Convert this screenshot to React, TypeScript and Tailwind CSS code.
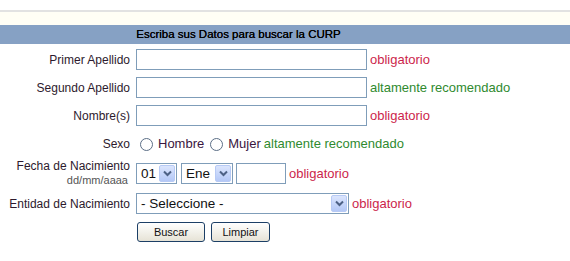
import type { ReactNode } from "react";

const FONT = { fontFamily: '"Liberation Sans", Arial, sans-serif' };

function Arrow() {
  return (
    <span className="flex h-[17px] w-[16px] items-center justify-center rounded-[2px] border border-[#b7caf5] bg-gradient-to-b from-[#dbe5fd] to-[#b4c8f6]">
      <svg width="9" height="7" viewBox="0 0 9 7">
        <path d="M1 1.5 L4.5 5 L8 1.5" fill="none" stroke="#4d6185" strokeWidth="2" />
      </svg>
    </span>
  );
}

function FakeSelect({ value, width }: { value: string; width: string }) {
  return (
    <div
      className={`flex h-[21px] ${width} items-center justify-between border border-[#7f9db9] bg-white pl-[4px] pr-[1px] text-[13.5px] leading-none text-[#111]`}
    >
      <span>{value}</span>
      <Arrow />
    </div>
  );
}

function Radio() {
  return <span className="inline-block h-[13px] w-[13px] rounded-full border border-[#5b6e86] bg-white" />;
}

function Label({ children }: { children: ReactNode }) {
  return <div className="text-right text-[12px] text-[#2d1a2d]">{children}</div>;
}

function Required() {
  return <span className="ml-[3px] text-[13px] text-[#cc1f4c]">obligatorio</span>;
}

function Recommended() {
  return <span className="ml-[3px] text-[13px] text-[#2f8a2f]">altamente recomendado</span>;
}

function TextBox({ width }: { width: string }) {
  return <div className={`h-[21px] ${width} border border-[#7f9db9] bg-white`} />;
}

function XpButton({ children, width }: { children: ReactNode; width: string }) {
  return (
    <button
      type="button"
      className={`h-[20px] ${width} rounded-[3px] border border-[#1c3f66] bg-gradient-to-b from-white to-[#e6e3d6] text-[11px] text-[#111]`}
    >
      {children}
    </button>
  );
}

export default function App() {
  return (
    <div className="h-[261px] w-[570px] overflow-hidden bg-white" style={FONT}>
      <div className="h-[10px]" />
      <div className="h-[2px] bg-[#e2e2e2]" />
      <div className="h-[13px] bg-[#fffef5]" />
      <div className="flex h-[19px] items-center bg-[#86a1c4]">
        <div className="w-[477px] text-center text-[11.5px] text-black [text-shadow:0_0_0.4px_#000]">
          Escriba sus Datos para buscar la CURP
        </div>
      </div>

      <div className="mt-[5px] grid grid-cols-[130px_1fr] items-center gap-x-[6px]">
        <Label>Primer Apellido</Label>
        <div className="flex items-center">
          <TextBox width="w-[231px]" />
          <Required />
        </div>

        <div className="col-span-2 h-[7px]" />
        <Label>Segundo Apellido</Label>
        <div className="flex items-center">
          <TextBox width="w-[231px]" />
          <Recommended />
        </div>

        <div className="col-span-2 h-[7px]" />
        <Label>Nombre(s)</Label>
        <div className="flex items-center">
          <TextBox width="w-[231px]" />
          <Required />
        </div>

        <div className="col-span-2 h-[8px]" />
        <Label>Sexo</Label>
        <div className="flex h-[20px] items-center text-[13px] text-[#3a1640]">
          <span className="ml-[4px] mr-[5px] flex"><Radio /></span>
          <span>Hombre</span>
          <span className="ml-[6px] mr-[5px] flex"><Radio /></span>
          <span>Mujer</span>
          <Recommended />
        </div>

        <div className="col-span-2 h-[7px]" />
        <div className="self-start text-right leading-none">
          <div className="mt-[-1px] text-[12px] text-[#2d1a2d]">Fecha de Nacimiento</div>
          <div className="mt-[3px] pr-[2px] text-[11px] text-[#555]">dd/mm/aaaa</div>
        </div>
        <div className="flex items-center">
          <FakeSelect value="01" width="w-[41px]" />
          <span className="w-[4px]" />
          <FakeSelect value="Ene" width="w-[52px]" />
          <span className="w-[3px]" />
          <TextBox width="w-[50px]" />
          <Required />
        </div>

        <div className="col-span-2 h-[7px]" />
        <Label>Entidad de Nacimiento</Label>
        <div className="flex items-center">
          <FakeSelect value="- Seleccione -" width="w-[213px]" />
          <Required />
        </div>

        <div className="col-span-2 h-[8px]" />
        <div />
        <div className="flex items-center gap-[6px] pl-[1px]">
          <XpButton width="w-[68px]">Buscar</XpButton>
          <XpButton width="w-[59px]">Limpiar</XpButton>
        </div>
      </div>
    </div>
  );
}
